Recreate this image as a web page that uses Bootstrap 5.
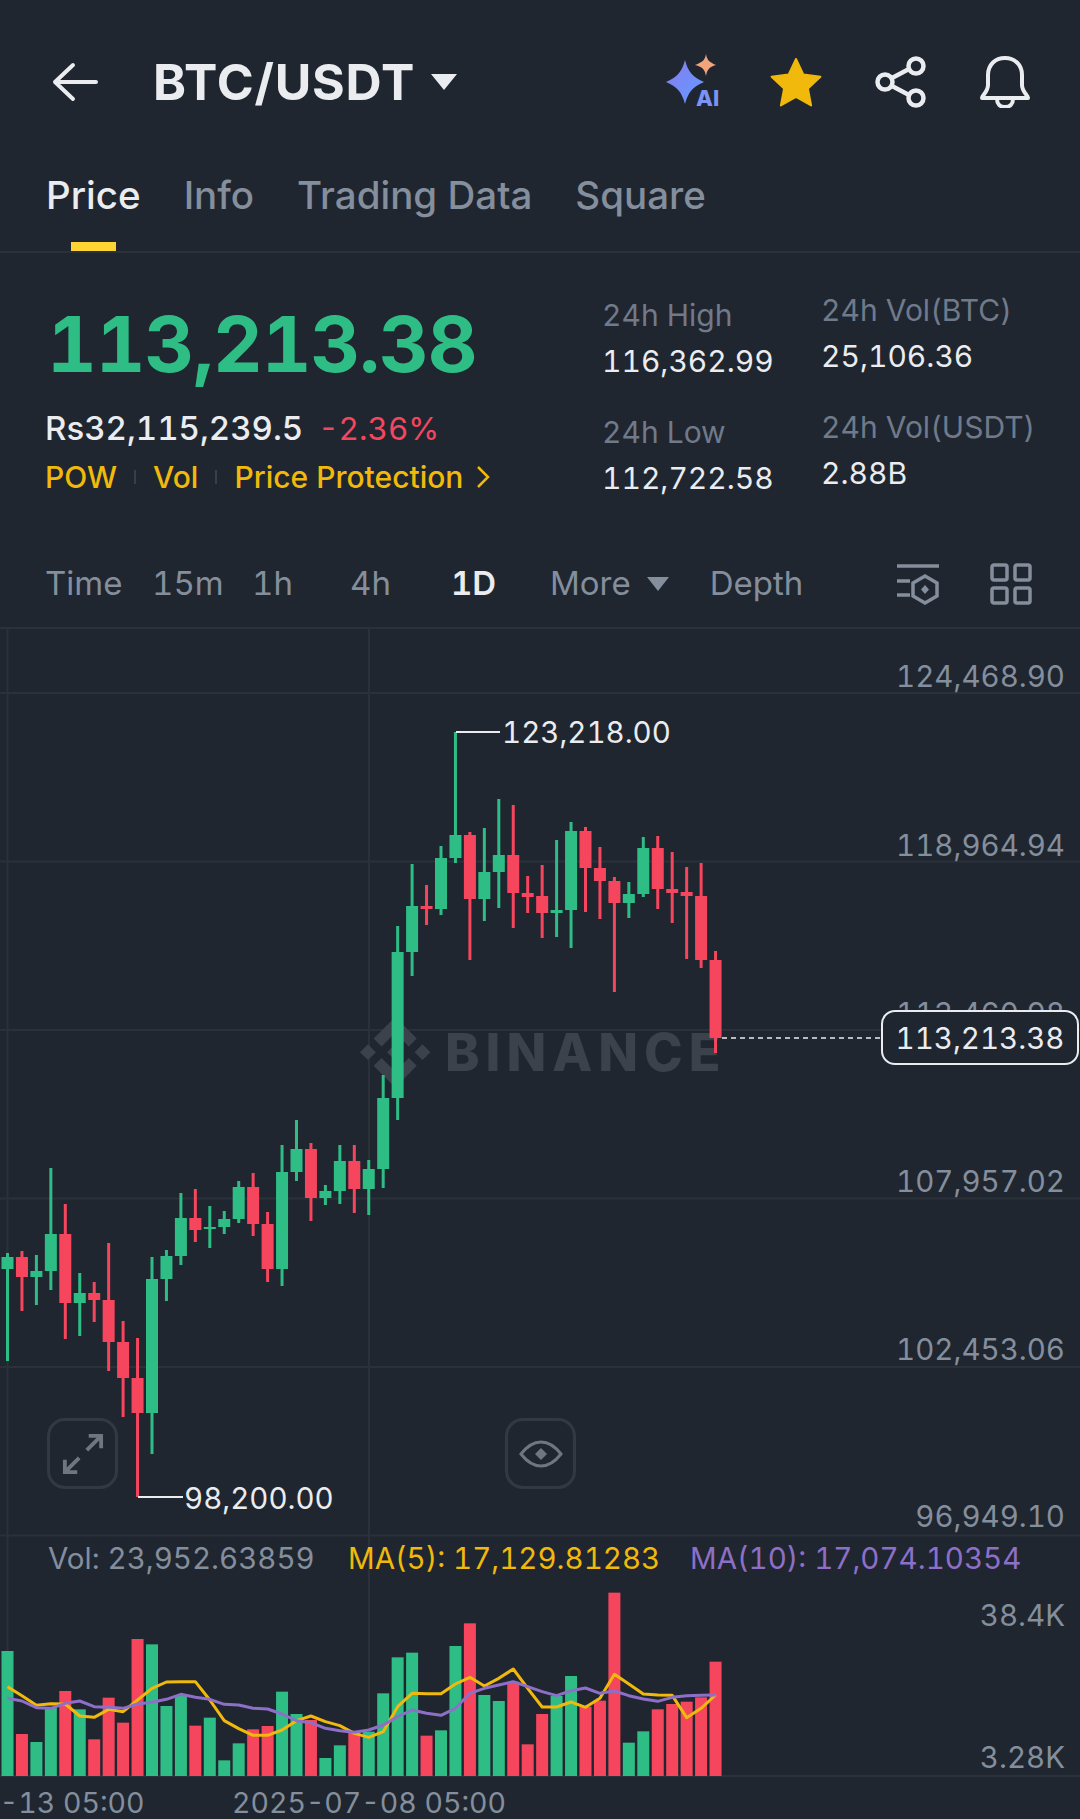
<!DOCTYPE html>
<html lang="en">
<head>
  <meta charset="UTF-8">
  <title>BTC/USDT</title>
  <meta name="viewport" content="width=device-width, initial-scale=1">
  <link href="https://cdn.jsdelivr.net/npm/bootstrap@5.3.3/dist/css/bootstrap.min.css" rel="stylesheet">
  <style>
    body {
      background-color: #1f2630;
      color: #eaecef;
      font-family: 'Inter', 'Liberation Sans', sans-serif;
      font-variant-numeric: tabular-nums;
      width: 1080px;
      height: 1819px;
      overflow: hidden;
    }

    .top-bar { height: 164px; padding: 0 50px 0 52px; }
    .back-btn { width: 46px; margin-right: 55px; }
    .pair-name { font-size: 50px; font-weight: 700; letter-spacing: 0.8px; line-height: 1; }
    .head-icons { gap: 53px; }

    .tab-row { height: 89px; padding: 0 46px; gap: 43px; border-bottom: 2px solid #2b3139; }
    .tab-item { font-size: 38.5px; font-weight: 500; color: #848e9c; height: 87px; }
    .tab-item span { line-height: 62px; }
    .tab-item.active { color: #eaecef; }
    .tab-mark { width: 45px; height: 9px; background: #fcd535; margin: 16px auto 0; }

    .quote-box { height: 288px; padding-left: 45px; }
    .quote-left { width: 557px; }
    .last-price { font-size: 77px; font-weight: 700; color: #2ebd85; line-height: 1; margin-top: 53px; margin-left: 2px; letter-spacing: -1px; }
    .fiat-line { font-size: 33px; font-weight: 500; line-height: 36px; margin-top: 27px; }
    .fiat-line .down { color: #f6465d; margin-left: 15px; font-size: 31.5px; font-weight: 400; }
    .tag-line { font-size: 30px; font-weight: 500; color: #f0b90b; line-height: 36px; margin-top: 12px; }
    .tag-sep { width: 2px; height: 14px; background: #3a3f46; margin: 0 17px; }
    .chevron { margin-left: 13px; }
    .stat-col { width: 219px; font-size: 30px; line-height: 36px; }
    .stat-label { color: #707a8a; }
    .stat-val { color: #eaecef; margin-top: 10px; }
    .stat-label.second { margin-top: 35px; }

    .time-row { height: 88px; padding: 0 48px 0 45px; border-bottom: 2px solid #2b3139; font-size: 33px; color: #848e9c; }
    .time-row .on { color: #eaecef; font-weight: 600; }

    .chart-box { width: 1080px; height: 1190px; }
    .chart-box svg text { font-family: 'Inter', 'Liberation Sans', sans-serif; }
    .price-tag {
      position: absolute; left: 881px; top: 381px; width: 198px; height: 55px;
      border: 2px solid #eaecef; border-radius: 14px; background: #1f2630;
      font-size: 29.5px; line-height: 53px; text-align: center; color: #eaecef;
    }
    .chart-btn {
      position: absolute; top: 789px; width: 71px; height: 71px;
      border: 3px solid #323945; border-radius: 18px;
    }
  </style>
</head>

<body>
  <div class="top-bar d-flex align-items-center">
    <svg class="back-btn" height="40" viewBox="0 0 46 40" fill="none" stroke="#eaecef" stroke-width="4" stroke-linecap="round" stroke-linejoin="round">
      <path d="M44 20H3M21 3L3 20l18 17"/>
    </svg>
    <span class="pair-name">BTC/USDT</span>
    <svg class="ms-3" width="26" height="16" viewBox="0 0 26 16"><path d="M0 0h26L13 16z" fill="#eaecef"/></svg>
    <div class="head-icons d-flex align-items-center ms-auto">
      <svg width="56" height="56" viewBox="0 0 56 56" style="margin-right:-3px">
        <defs>
          <linearGradient id="aiGrad" x1="0" y1="0" x2="1" y2="1">
            <stop offset="0" stop-color="#8a7cf0"/><stop offset="1" stop-color="#5f9bff"/>
          </linearGradient>
        </defs>
        <path d="M21 6C24 17 28 23 40 28 28 33 24 39 21 50 18 39 14 33 2 28 14 23 18 17 21 6z" fill="url(#aiGrad)"/>
        <path d="M42 0C43 6 45 8 52 11 45 13 43 16 42 22 41 16 39 13 31 11 39 8 41 6 42 0z" fill="#f2a57d"/>
        <text x="32" y="52" font-size="22" font-weight="800" fill="#7d92f5" font-family="Inter, sans-serif">AI</text>
      </svg>
      <svg width="52" height="50" viewBox="0 0 52 50">
        <path d="M26 2l7.4 15.6 17 2.2-12.5 11.7 3.2 16.9L26 40l-15.100 8.400 3.200-16.900L1.600 19.800l17-2.200z" fill="#f0b90b" stroke="#f0b90b" stroke-width="2" stroke-linejoin="round"/>
      </svg>
      <svg width="52" height="52" viewBox="0 0 52 52" fill="none" stroke="#eaecef" stroke-width="4.500">
        <circle cx="10" cy="26" r="7.500"/><circle cx="41" cy="10" r="7.500"/><circle cx="41" cy="42" r="7.500"/>
        <path d="M17 22l17-9M17 30l17 9"/>
      </svg>
      <svg width="50" height="52" viewBox="0 0 50 52" fill="none" stroke="#eaecef" stroke-width="4" stroke-linejoin="round">
        <path d="M2 42c0-3 6-6 6-13V19C8 9 15 2 25 2s17 7 17 17v10c0 7 6 10 6 13z"/>
        <path d="M17 43c0 5 3 8 8 8s8-3 8-8"/>
      </svg>
    </div>
  </div>

  <div class="tab-row d-flex">
    <div class="tab-item active"><span>Price</span><div class="tab-mark"></div></div>
    <div class="tab-item"><span>Info</span></div>
    <div class="tab-item"><span>Trading Data</span></div>
    <div class="tab-item"><span>Square</span></div>
  </div>

  <div class="quote-box d-flex">
    <div class="quote-left">
      <div class="last-price">113,213.38</div>
      <div class="fiat-line">Rs32,115,239.5<span class="down">-2.36%</span></div>
      <div class="tag-line d-flex align-items-center">
        <span>POW</span><span class="tag-sep"></span><span>Vol</span><span class="tag-sep"></span><span>Price Protection</span>
        <svg class="chevron" width="14" height="24" viewBox="0 0 14 24" fill="none" stroke="#f0b90b" stroke-width="2.500"><path d="M2 2l10 10-10 10"/></svg>
      </div>
    </div>
    <div class="stat-col" style="padding-top:44px">
      <div class="stat-label">24h High</div>
      <div class="stat-val">116,362.99</div>
      <div class="stat-label second">24h Low</div>
      <div class="stat-val">112,722.58</div>
    </div>
    <div class="stat-col" style="padding-top:39px">
      <div class="stat-label">24h Vol(BTC)</div>
      <div class="stat-val">25,106.36</div>
      <div class="stat-label second">24h Vol(USDT)</div>
      <div class="stat-val">2.88B</div>
    </div>
  </div>

  <div class="time-row d-flex align-items-center">
    <span style="width:107px">Time</span>
    <span style="width:100px">15m</span>
    <span style="width:98px">1h</span>
    <span style="width:101px">4h</span>
    <span class="on" style="width:99px">1D</span>
    <span>More</span>
    <svg class="ms-3" width="22" height="14" viewBox="0 0 22 14" style="margin-right:41px"><path d="M0 0h22L11 14z" fill="#848e9c"/></svg>
    <span>Depth</span>
    <svg class="ms-auto" width="44" height="42" viewBox="0 0 44 42" fill="none" stroke="#848e9c" stroke-width="3.500" style="margin-right:50px">
      <path d="M1 3h42M1 18h13M1 32h13"/>
      <path d="M29 13l12 7v13l-12 7-12-7V20z"/>
      <path d="M29 22l4 4.500-4 4.500-4-4.500z" fill="#848e9c" stroke="none"/>
    </svg>
    <svg width="42" height="42" viewBox="0 0 42 42" fill="none" stroke="#848e9c" stroke-width="3.500">
      <rect x="2" y="2" width="15" height="15" rx="2"/><rect x="25" y="2" width="15" height="15" rx="2"/>
      <rect x="2" y="25" width="15" height="15" rx="2"/><rect x="25" y="25" width="15" height="15" rx="2"/>
    </svg>
  </div>

  <div class="chart-box position-relative">
    <svg id="chart" width="1080" height="1190" viewBox="0 629 1080 1190" class="d-block"></svg>
    <div class="price-tag">113,213.38</div>
    <div class="chart-btn d-flex align-items-center justify-content-center" style="left:47px">
      <svg width="42" height="42" viewBox="0 0 44 44" fill="none" stroke="#6f7681" stroke-width="4">
        <path d="M26 18L41 3M28 3h13v13M18 26L3 41M3 28v13h13"/>
      </svg>
    </div>
    <div class="chart-btn d-flex align-items-center justify-content-center" style="left:505px">
      <svg width="44" height="28" viewBox="0 0 44 28" fill="none" stroke="#6f7681" stroke-width="3">
        <path d="M2 14C9 5 15 2 22 2s13 3 20 12c-7 9-13 12-20 12S9 23 2 14z"/>
        <path d="M22 8l6 6-6 6-6-6z" fill="#6f7681" stroke="none"/>
      </svg>
    </div>
  </div>

  <script>
    // [color, wickTop, bodyTop, bodyBottom, wickBottom] in page px
    const velas = [
      ['g',1253,1257,1269,1361],['r',1251,1257,1277,1311],['g',1255,1271,1277,1305],['g',1168,1234,1271,1290],
      ['r',1204,1234,1303,1339],['g',1273,1293,1303,1336],['r',1282,1293,1300,1322],['r',1243,1300,1342,1371],
      ['r',1321,1342,1378,1417],['r',1338,1378,1413,1497],['g',1257,1279,1413,1454],['g',1250,1256,1279,1301],
      ['g',1193,1218,1256,1265],['r',1189,1218,1230,1242],['g',1206,1227,1229,1248],['g',1211,1219,1227,1234],
      ['g',1181,1187,1219,1223],['r',1173,1187,1224,1236],['r',1212,1224,1269,1282],['g',1145,1172,1269,1286],
      ['g',1120,1149,1172,1181],['r',1143,1149,1198,1221],['g',1185,1191,1198,1205],['g',1145,1161,1191,1204],
      ['r',1145,1161,1189,1213],['g',1160,1169,1189,1215],['g',1075,1098,1169,1188],['g',926,952,1098,1120],
      ['g',864,906,952,976],['r',885,906,909,925],['g',846,858,909,915],['g',732,835,858,863],
      ['r',832,835,899,960],['g',828,872,899,921],['g',799,855,872,908],['r',805,855,893,928],
      ['r',876,893,897,913],['r',865,896,913,938],['g',840,910,913,937],['g',822,831,910,948],
      ['r',827,831,868,912],['r',847,868,881,919],['r',877,881,903,992],['g',882,894,903,918],
      ['g',837,848,894,897],['r',836,848,889,909],['r',852,889,893,923],['r',867,892,896,959],
      ['r',863,896,960,968],['r',951,960,1038,1053]
    ];
    const topoVol = [363,612,636,533,483,538,628,503,578,327,343,528,498,587,563,691,640,598,588,485,552,570,684,646,605,605,490,382,
      368,617,601,348,280,495,513,455,643,552,498,438,530,512,188,638,604,538,522,515,502,395];
    const ma5 = [470,497,526,521,522,558,562,538,545,510,475,456,455,455,510,572,596,616,616,600,572,558,575,587,610,622,605,530,
      490,491,491,462,442,468,445,417,475,531,531,516,532,505,433,462,492,495,496,563,535,495];
    const ma10 = [505,513,533,535,520,513,530,532,535,522,517,508,493,502,508,523,525,535,537,552,572,578,595,602,607,600,585,560,
      540,550,556,535,490,475,465,455,470,485,497,482,474,490,483,497,507,514,502,497,496,495];
    const cores = { g: '#2ebd85', r: '#f6465d' };
    const eixoX = i => 7.5 + i * 14.45;
    let s = '';

    function texto(x, y, t, cor, tam, extra) {
      return `<text x="${x}" y="${y}" fill="${cor}" font-size="${tam}" ${extra || ''}>${t}</text>`;
    }

    // grade
    [693, 861.500, 1030, 1198.500, 1367, 1535.500, 1776].forEach(y => {
      s += `<path d="M0 ${y}H1080" stroke="#2b3139" stroke-width="2"/>`;
    });
    [7.500, 369].forEach(x => {
      s += `<path d="M${x} 629V1776" stroke="#2b3139" stroke-width="2"/>`;
    });

    // marca d'agua
    s += `<g fill="#3b424c" transform="translate(360 1017) scale(2.200)">
      <path d="M9.800 13.400L16 7.200l6.200 6.200 3.600-3.600L16 0 6.200 9.800zM0 16l3.600-3.600L7.200 16l-3.600 3.600zM9.800 18.600L16 24.800l6.200-6.200 3.600 3.600L16 32l-9.800-9.800zM24.800 16l3.600-3.600L32 16l-3.600 3.600zM16 12.300l3.700 3.700-3.700 3.700-3.700-3.700z"/></g>`;
    s += texto(445, 1071, 'BINANCE', '#3b424c', 52, 'font-weight="800" letter-spacing="6"');

    // eixo de precos
    [['124,468.90', 687], ['118,964.94', 856], ['113,460.98', 1024], ['107,957.02', 1192], ['102,453.06', 1360], ['96,949.10', 1527]].forEach(p => {
      s += texto(1065, p[1], p[0], '#848e9c', 29.500, 'text-anchor="end"');
    });

    // velas
    velas.forEach((v, i) => {
      const x = eixoX(i), c = cores[v[0]];
      s += `<rect x="${x - 1.500}" y="${v[1]}" width="3" height="${v[4] - v[1]}" fill="${c}"/>`;
      s += `<rect x="${x - 6}" y="${v[2]}" width="12" height="${v[3] - v[2]}" fill="${c}"/>`;
    });

    // maximo e minimo
    s += `<path d="M456 732H500M138 1497H183" stroke="#eaecef" stroke-width="2"/>`;
    s += texto(502, 743, '123,218.00', '#eaecef', 29.500);
    s += texto(184, 1509, '98,200.00', '#eaecef', 29.500);
    s += `<path d="M722 1038H881" stroke="#eaecef" stroke-width="1.500" stroke-dasharray="5 4"/>`;

    // volume
    s += texto(48, 1569, 'Vol: 23,952.63859', '#848e9c', 29.500);
    s += texto(348, 1569, 'MA(5): 17,129.81283', '#f0b90b', 29.500);
    s += texto(690, 1569, 'MA(10): 17,074.10354', '#8e6fc7', 29.500);
    s += texto(1065, 1626, '38.4K', '#848e9c', 29.500, 'text-anchor="end"');
    s += texto(1065, 1768, '3.28K', '#848e9c', 29.500, 'text-anchor="end"');

    velas.forEach((v, i) => {
      const y = 1530 + topoVol[i] / 3;
      s += `<rect x="${eixoX(i) - 6}" y="${y}" width="12" height="${1776 - y}" fill="${cores[v[0]]}"/>`;
    });
    const linha = (d, cor) => `<polyline points="${d.map((v, i) => eixoX(i) + ',' + (1530 + v / 3)).join(' ')}" fill="none" stroke="${cor}" stroke-width="3" stroke-linejoin="round"/>`;
    s += linha(ma5, '#f0b90b') + linha(ma10, '#8e6fc7');

    // datas
    s += texto(7.500, 1813, '2025-06-13 05:00', '#848e9c', 28.500, 'text-anchor="middle"');
    s += texto(369, 1813, '2025-07-08 05:00', '#848e9c', 28.500, 'text-anchor="middle"');

    document.getElementById('chart').innerHTML = s;
  </script>
  <script src="https://cdn.jsdelivr.net/npm/bootstrap@5.3.3/dist/js/bootstrap.bundle.min.js"></script>
</body>
</html>
